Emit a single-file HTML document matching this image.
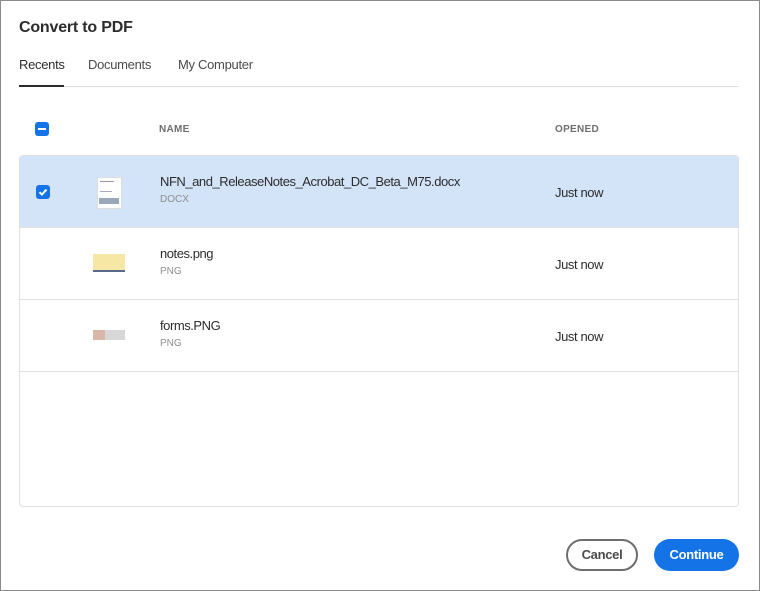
<!DOCTYPE html>
<html><head><style>
*{box-sizing:border-box;margin:0;padding:0}
body{width:760px;height:591px;overflow:hidden;background:#fff;font-family:"Liberation Sans",sans-serif;color:#2c2c2c;position:relative}
.frame{position:absolute;inset:0;border:1px solid #8a8a8a}
.a{position:absolute}
.title{left:19px;top:19px;font-size:16px;font-weight:bold;color:#2c2c2c;letter-spacing:-.2px}
.tab{top:57px;font-size:13px;color:#4b4b4b;letter-spacing:-.3px}
.hdr{top:124px;font-size:10px;font-weight:bold;color:#6e6e6e;letter-spacing:.3px}
.box{left:19px;top:155px;width:720px;height:352px;border:1px solid #e1e1e1;border-radius:4px;overflow:hidden}
.row{position:absolute;left:0;width:718px;height:72px;border-bottom:1px solid #e1e1e1}
.nm{position:absolute;left:140px;top:18px;font-size:13px;color:#2c2c2c;letter-spacing:-.45px}
.ty{position:absolute;left:140px;top:38px;font-size:10px;color:#8e8e8e}
.op{position:absolute;left:535px;top:29px;font-size:13px;color:#2c2c2c;letter-spacing:-.4px}
.cb{position:absolute;width:14px;height:14px;border-radius:3px;background:#1473e6}
.btn{top:539px;height:32px;border-radius:16px;font-size:13px;font-weight:bold;text-align:center;line-height:28px;letter-spacing:-.3px}
</style></head><body>
<div class="frame"></div>
<div class="a title">Convert to PDF</div>
<div class="a tab" style="left:19px;color:#2c2c2c">Recents</div>
<div class="a tab" style="left:88px">Documents</div>
<div class="a tab" style="left:178px">My Computer</div>
<div class="a" style="left:19px;top:86px;width:720px;height:1px;background:#e1e1e1"></div>
<div class="a" style="left:19px;top:85px;width:45px;height:2px;background:#2c2c2c"></div>
<div class="cb" style="left:35px;top:122px"><div style="position:absolute;left:3px;top:6px;width:8px;height:2px;background:#fff"></div></div>
<div class="a hdr" style="left:159px">NAME</div>
<div class="a hdr" style="left:555px">OPENED</div>
<div class="a box">
 <div class="row" style="top:0;background:#d3e3f8">
  <div class="cb" style="left:16px;top:29px"><svg width="14" height="14" viewBox="0 0 14 14"><path d="M3.5 7.2l2.4 2.4 4.6-5" stroke="#fff" stroke-width="2" fill="none"/></svg></div>
  <div style="position:absolute;left:77px;top:21px;width:25px;height:32px;background:#fff;border:1px solid #ddd"><div style="position:absolute;left:2px;top:3px;width:14px;height:1px;background:#999"></div><div style="position:absolute;left:2px;top:13px;width:12px;height:1px;background:#aac"></div><div style="position:absolute;left:1px;top:20px;width:20px;height:6px;background:#9aa7b8"></div></div>
  <div class="nm">NFN_and_ReleaseNotes_Acrobat_DC_Beta_M75.docx</div>
  <div class="ty">DOCX</div><div class="op">Just now</div>
 </div>
 <div class="row" style="top:72px">
  <div style="position:absolute;left:73px;top:26px;width:32px;height:18px;background:#f6e7a5;border-bottom:2px solid #5a6a8a"></div>
  <div class="nm">notes.png</div><div class="ty">PNG</div><div class="op">Just now</div>
 </div>
 <div class="row" style="top:144px">
  <div style="position:absolute;left:73px;top:30px;width:32px;height:10px;background:#d8d8d8"><div style="width:12px;height:10px;background:#d9b7a8"></div></div>
  <div class="nm">forms.PNG</div><div class="ty">PNG</div><div class="op">Just now</div>
 </div>
</div>
<div class="a btn" style="left:566px;width:72px;border:2px solid #6e6e6e;color:#4b4b4b">Cancel</div>
<div class="a btn" style="left:654px;width:85px;background:#1473e6;color:#fff;line-height:32px">Continue</div>
</body></html>
